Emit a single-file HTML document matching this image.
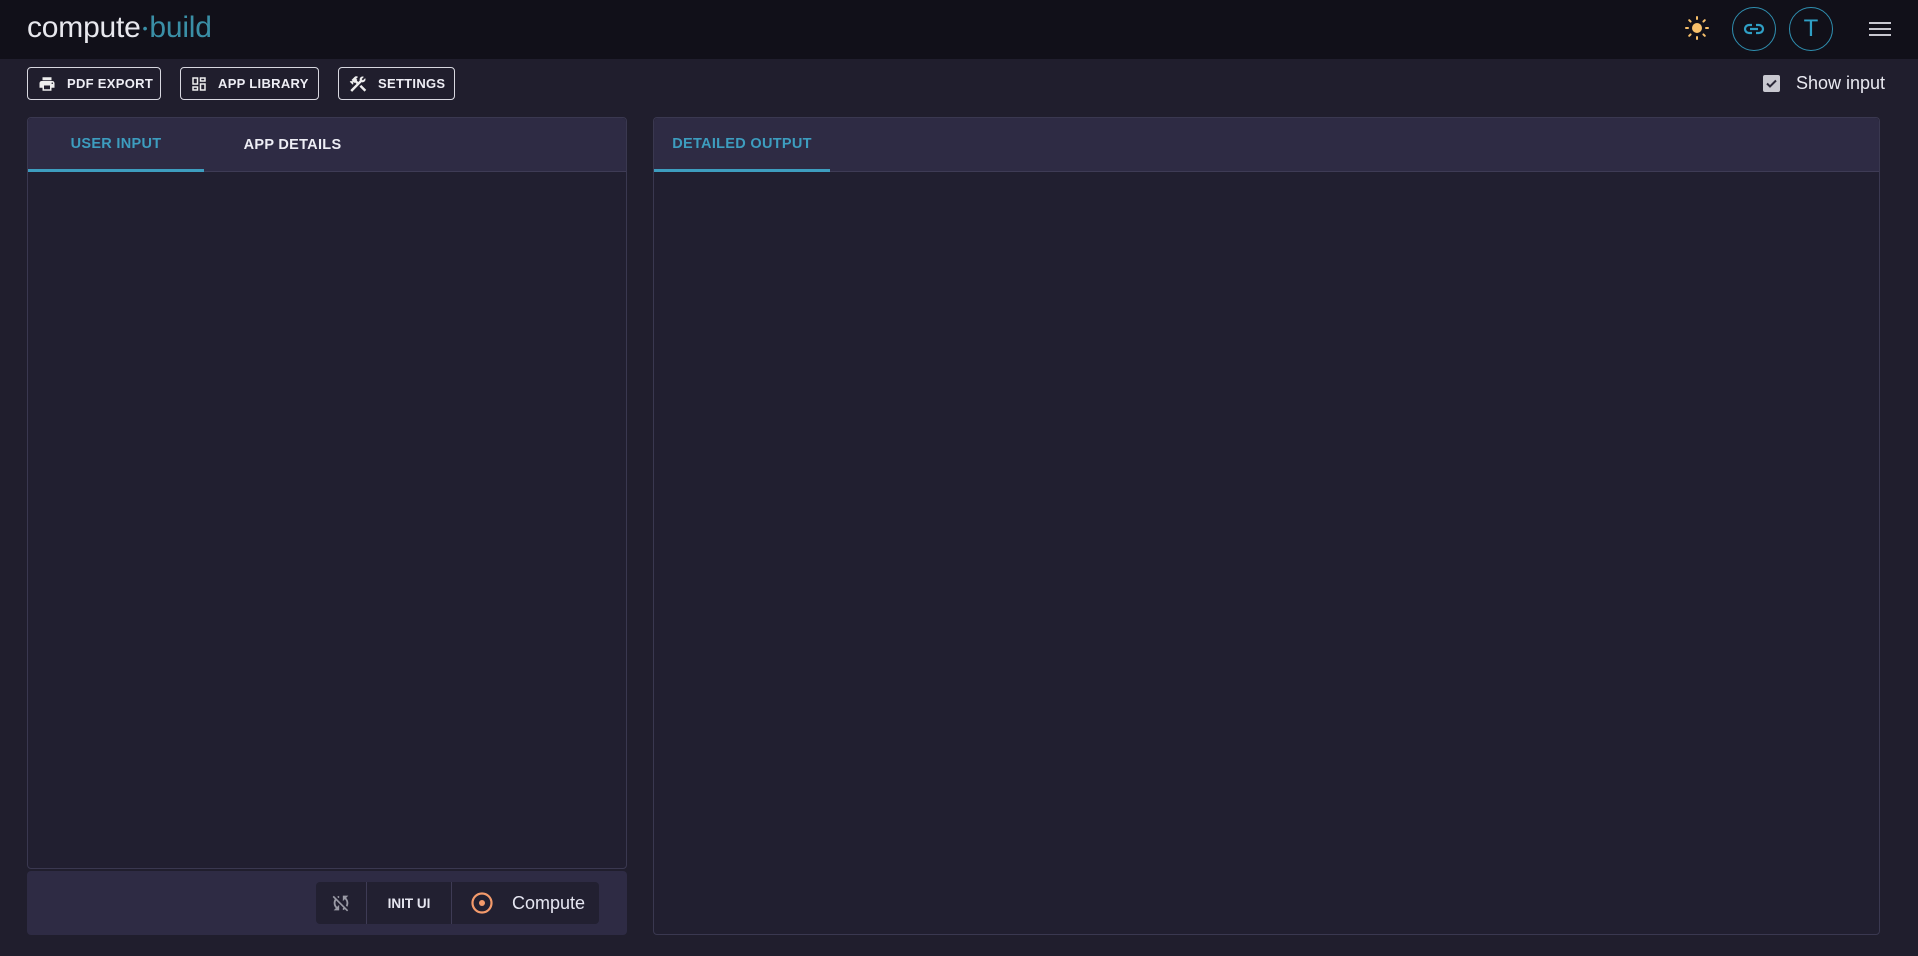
<!DOCTYPE html>
<html><head><meta charset="utf-8"><style>
*{box-sizing:border-box;margin:0;padding:0}
body{width:1918px;height:956px;background:#201e2d;font-family:"Liberation Sans",sans-serif;color:#e6e6f0;position:relative;overflow:hidden}
.hdr{position:absolute;left:0;top:0;width:1918px;height:59px;background:#111019}
.logo{position:absolute;left:27px;top:11px;font-size:30px;color:#e8e8ee;letter-spacing:-0.2px}
.logo .b{color:#3a8fa6}
.logo .d{color:#3a8fa6;font-size:14px;position:relative;top:-4px;margin:0 2px}
.btn{position:absolute;top:67px;height:33px;border:1px solid #d8d8e0;border-radius:4px;font-size:13px;font-weight:bold;display:flex;align-items:center;padding-left:9px;gap:10px;color:#eeeef5;letter-spacing:0.3px}
.panel{position:absolute;background:#211f30;border:1px solid #3a3850;border-radius:4px}
.tabs{position:absolute;left:0;top:0;right:0;height:54px;background:#2e2b44;border-bottom:1px solid #3e3b55;border-radius:4px 4px 0 0}
.tab{position:absolute;top:0;height:54px;display:flex;align-items:center;justify-content:center;font-size:14.5px;font-weight:bold;letter-spacing:0.3px}
.act{color:#3d9dbf;border-bottom:3px solid #3d9dbf}
.circ{position:absolute;top:7px;width:44px;height:44px;border:1.5px solid #2f8fb0;border-radius:50%;display:flex;align-items:center;justify-content:center;color:#2f9fc5}
</style></head><body>
<div class="hdr">
<div class="logo">compute<span class="d">•</span><span class="b">build</span></div>
<svg style="position:absolute;left:1685px;top:16px" width="24" height="24" viewBox="0 0 24 24"><circle cx="12" cy="12" r="5" fill="#f8c06a"/><g stroke="#f8c06a" stroke-width="2" stroke-linecap="round"><path d="M12 1v2M12 21v2M1 12h2M21 12h2M4.2 4.2l1.4 1.4M18.4 18.4l1.4 1.4M4.2 19.8l1.4-1.4M18.4 5.6l1.4-1.4"/></g></svg>
<div class="circ" style="left:1732px"><svg width="24" height="24" viewBox="0 0 24 24"><path d="M10 8H7a4 4 0 0 0 0 8h3M14 8h3a4 4 0 0 1 0 8h-3M8 12h8" stroke="#2f9fc5" stroke-width="2.2" fill="none"/></svg></div>
<div class="circ" style="left:1789px;font-size:24px">T</div>
<svg style="position:absolute;left:1869px;top:20px" width="22" height="18" viewBox="0 0 22 18"><path d="M0 3h22M0 9h22M0 15h22" stroke="#c8c8d0" stroke-width="2"/></svg>
</div>
<div class="btn" style="left:27px;width:134px"><svg width="20" height="18" viewBox="0 0 24 24"><path fill="#eee" d="M19 8H5c-1.66 0-3 1.34-3 3v6h4v4h12v-4h4v-6c0-1.66-1.34-3-3-3zm-3 11H8v-5h8v5zm3-7c-.55 0-1-.45-1-1s.45-1 1-1 1 .45 1 1-.45 1-1 1zm-1-9H6v4h12V3z"/></svg>PDF EXPORT</div>
<div class="btn" style="left:180px;width:139px"><svg width="18" height="18" viewBox="0 0 24 24"><path fill="#eee" d="M3 3h8v10H3zm2 2v6h4V5zM13 3h8v6h-8zm2 2v2h4V5zM13 11h8v10h-8zm2 2v6h4v-6zM3 15h8v6H3zm2 2v2h4v-2z"/></svg>APP LIBRARY</div>
<div class="btn" style="left:338px;width:117px"><svg width="20" height="20" viewBox="0 0 24 24"><path fill="#eee" d="M13.8 15.2l2.1-2.1 6 6-2.1 2.1zM17.5 10c1.9 0 3.5-1.6 3.5-3.5 0-.6-.2-1.1-.4-1.6l-2.7 2.7-1.5-1.5 2.7-2.7c-.5-.2-1-.4-1.6-.4C15.6 3 14 4.6 14 6.5c0 .4.1.8.2 1.2l-1.9 1.9-1.8-1.8.7-.7-1.4-1.4L12 3.6a3 3 0 0 0-4.2 0L4.2 7.2l1.4 1.4H2.8l-.7.7 3.5 3.5.7-.7V9.4l1.4 1.4.7-.7 1.8 1.8-7.4 7.4 2.1 2.1L16.3 9.8c.4.1.8.2 1.2.2z"/></svg>SETTINGS</div>
<div style="position:absolute;left:1763px;top:75px;width:17px;height:17px;background:#c8c8d0;border-radius:2px"><svg width="17" height="17" viewBox="0 0 17 17"><path d="M4 8.5l3 3 6-6" stroke="#2a2838" stroke-width="2" fill="none"/></svg></div>
<div style="position:absolute;left:1796px;top:73px;font-size:18px;color:#e8e8f0">Show input</div>

<div class="panel" style="left:27px;top:117px;width:600px;height:752px">
<div class="tabs"><div class="tab act" style="left:0;width:176px">USER INPUT</div><div class="tab" style="left:173px;width:183px;color:#eeeef5">APP DETAILS</div></div>
</div>
<div style="position:absolute;left:27px;top:871px;width:600px;height:64px;background:#2e2b44;border-radius:4px">
<div style="position:absolute;left:289px;top:11px;width:283px;height:42px;background:#222031;border-radius:4px;display:flex;align-items:center">
<div style="width:51px;height:42px;display:flex;align-items:center;justify-content:center;border-right:1px solid #3e3b55"><svg width="22" height="22" viewBox="0 0 24 24"><path fill="#9a9aa5" d="M10 6.35V4.26c-.8.21-1.55.54-2.23.96l1.46 1.46c.25-.12.5-.24.77-.33zm-7.14-.94l2.36 2.36C4.45 8.99 4 10.44 4 12c0 2.21.91 4.2 2.36 5.64L4 20h6v-6l-2.24 2.24C6.68 15.15 6 13.66 6 12c0-1 .25-1.94.68-2.77l8.08 8.08c-.25.13-.5.25-.77.34v2.09c.8-.21 1.55-.54 2.23-.96l2.36 2.36 1.27-1.27L4.14 4.14 2.86 5.41zM20 4h-6v6l2.24-2.24C17.32 8.85 18 10.34 18 12c0 1-.25 1.94-.68 2.77l1.46 1.46C19.55 15.01 20 13.56 20 12c0-2.21-.91-4.2-2.36-5.64L20 4z"/></svg></div>
<div style="width:85px;height:42px;display:flex;align-items:center;justify-content:center;border-right:1px solid #3e3b55;font-size:13.5px;font-weight:bold">INIT UI</div>
<div style="flex:1;height:42px;display:flex;align-items:center;padding-left:18px;gap:18px;font-size:18px;color:#e6e6f2"><svg width="24" height="24" viewBox="0 0 24 24"><circle cx="12" cy="12" r="9.5" stroke="#f39a6b" stroke-width="2.2" fill="none"/><circle cx="12" cy="12" r="3" fill="#f39a6b"/></svg>Compute</div>
</div></div>

<div class="panel" style="left:653px;top:117px;width:1227px;height:818px">
<div class="tabs"><div class="tab act" style="left:0;width:176px">DETAILED OUTPUT</div></div>
</div>
</body></html>
